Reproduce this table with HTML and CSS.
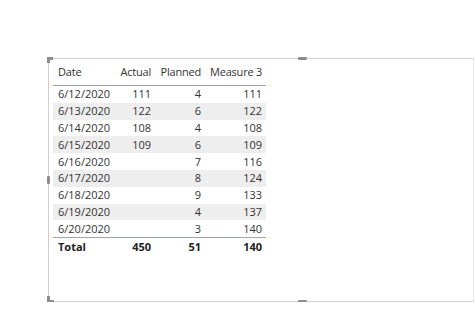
FILE: index.html
```html
<!DOCTYPE html>
<html>
<head>
<meta charset="utf-8">
<link rel="stylesheet" href="styles.css">
</head>
<body>
<div class="frame">
  <span class="h h-tl"></span>
  <span class="h h-bl"></span>
  <span class="h h-tm"></span>
  <span class="h h-bm"></span>
  <span class="h h-lm"></span>
  <table class="grid">
    <colgroup><col class="c1"><col class="c2"><col class="c3"><col class="c4"></colgroup>
    <thead>
      <tr><th class="l">Date</th><th>Actual</th><th>Planned</th><th>Measure 3</th></tr>
    </thead>
    <tbody>
      <tr><td class="l">6/12/2020</td><td>111</td><td>4</td><td>111</td></tr>
      <tr class="alt"><td class="l">6/13/2020</td><td>122</td><td>6</td><td>122</td></tr>
      <tr><td class="l">6/14/2020</td><td>108</td><td>4</td><td>108</td></tr>
      <tr class="alt"><td class="l">6/15/2020</td><td>109</td><td>6</td><td>109</td></tr>
      <tr><td class="l">6/16/2020</td><td></td><td>7</td><td>116</td></tr>
      <tr class="alt"><td class="l">6/17/2020</td><td></td><td>8</td><td>124</td></tr>
      <tr><td class="l">6/18/2020</td><td></td><td>9</td><td>133</td></tr>
      <tr class="alt"><td class="l">6/19/2020</td><td></td><td>4</td><td>137</td></tr>
      <tr><td class="l">6/20/2020</td><td></td><td>3</td><td>140</td></tr>
    </tbody>
    <tfoot>
      <tr><td class="l">Total</td><td>450</td><td>51</td><td>140</td></tr>
    </tfoot>
  </table>
</div>
</body>
</html>
```
FILE: styles.css
```css
html, body {
  margin: 0;
  padding: 0;
  background: #ffffff;
}
body {
  padding: 58px 0 0 48px;
  font-family: "Open Sans", "Noto Sans", sans-serif;
  font-size: 11px;
  color: #333333;
}
.frame {
  position: relative;
  box-sizing: border-box;
  width: 426px;
  height: 244px;
  border: 1px solid #cfcfcf;
  border-right-color: #e6e6e6;
  padding-left: 4px;
}
.h {
  position: absolute;
  background: #8e8e8e;
}
.h-tl {
  left: -2px;
  top: -2px;
  width: 6px;
  height: 6px;
  background: none;
  border-left: 3px solid #8e8e8e;
  border-top: 3px solid #8e8e8e;
  box-sizing: border-box;
}
.h-bl {
  left: -2px;
  bottom: -2px;
  width: 7px;
  height: 7px;
  background: none;
  border-left: 3px solid #8e8e8e;
  border-bottom: 3px solid #8e8e8e;
  box-sizing: border-box;
}
.h-tm {
  left: 249px;
  top: -2px;
  width: 9px;
  height: 3px;
  border-radius: 1px;
}
.h-bm {
  left: 249px;
  bottom: -2px;
  width: 9px;
  height: 3px;
  border-radius: 1px;
}
.h-lm {
  left: -2px;
  top: 117px;
  width: 3px;
  height: 8px;
  border-radius: 1px;
}
.grid {
  border-collapse: collapse;
  table-layout: fixed;
  width: 213px;
}
.c1 { width: 61px; }
.c2 { width: 41px; }
.c3 { width: 50px; }
.c4 { width: 61px; }
.grid th, .grid td {
  padding: 0 4px 0 5px;
  text-align: right;
  white-space: nowrap;
  line-height: 16px;
  height: 17px;
}
.grid th.l, .grid td.l {
  text-align: left;
}
.grid th {
  font-weight: normal;
  letter-spacing: -0.2px;
  padding-top: 4px;
  padding-bottom: 5px;
  border-bottom: 1px solid #7aaede;
  color: #333333;
}
.grid tbody td {
  padding-top: 0;
  padding-bottom: 0;
  height: 16.8px;
}
.grid tbody tr.alt td {
  background: #eeeeee;
}
.grid tfoot td {
  font-weight: bold;
  border-top: 1px solid #7aaede;
  height: 18px;
  color: #222222;
}
```
